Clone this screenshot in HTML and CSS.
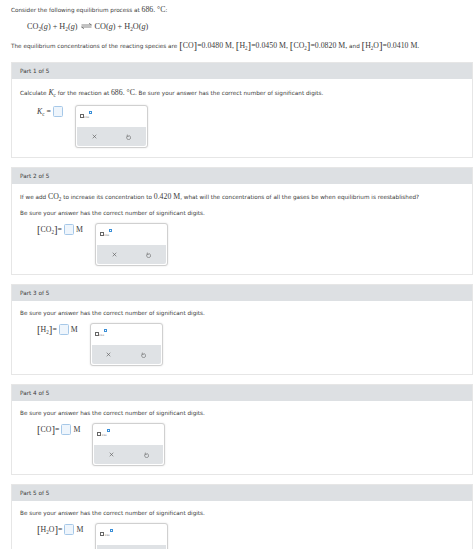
FILE: index.html
```html
<!DOCTYPE html>
<html>
<head>
<meta charset="utf-8">
<link rel="stylesheet" href="styles.css">
</head>
<body>
<div class="intro">
  <p class="txt l1">Consider the following equilibrium process at <span class="m">686. °C</span>:</p>
  <p class="eq m">CO<sub>2</sub>(<i>g</i>) + H<sub>2</sub>(<i>g</i>) <svg class="arr" width="11" height="6" viewBox="0 0 11 6"><path d="M0.5 2 H10.5 L8 0.3 M10.5 4 H0.5 L3 5.7" fill="none" stroke="#333" stroke-width="0.6"/></svg> CO(<i>g</i>) + H<sub>2</sub>O(<i>g</i>)</p>
  <p class="txt conc">The equilibrium concentrations of the reacting species are <span class="m"><span class="br">[</span>CO<span class="br">]</span>=0.0480 M, <span class="br">[</span>H<sub>2</sub><span class="br">]</span>=0.0450 M, <span class="br">[</span>CO<sub>2</sub><span class="br">]</span>=0.0820 M, </span>and <span class="m"><span class="br">[</span>H<sub>2</sub>O<span class="br">]</span>=0.0410 M.</span></p>
</div>

<section class="card">
  <div class="hd">Part 1 of 5</div>
  <div class="bd first">
    <p class="txt">Calculate <span class="m"><i>K</i><sub>c</sub></span> for the reaction at <span class="m">686. °C</span>. Be sure your answer has the correct number of significant digits.</p>
    <div class="row r1">
      <div class="ans"><span class="m lab"><i>K</i><sub>c</sub> =</span><span class="box"></span></div>
      <div class="pop">
        <div class="ptop"><span class="sq"></span><span class="x10">×10</span><span class="sup"></span></div>
        <div class="pbar">
          <span class="btn"><svg width="5" height="5" viewBox="0 0 5 5"><path d="M0.7 0.7 L4.3 4.3 M4.3 0.7 L0.7 4.3" stroke="#555" stroke-width="0.6" fill="none"/></svg></span>
          <span class="btn"><svg width="5" height="6" viewBox="0 0 5 6"><path d="M1.2 2.2 A2 2 0 1 0 2.6 1.6" stroke="#555" stroke-width="0.55" fill="none"/><path d="M1.4 0.6 L1.1 2.3 L2.8 2.4" stroke="#555" stroke-width="0.55" fill="none"/></svg></span>
        </div>
      </div>
    </div>
  </div>
</section>

<section class="card">
  <div class="hd">Part 2 of 5</div>
  <div class="bd second">
    <p class="txt">If we add <span class="m">CO<sub>2</sub></span> to increase its concentration to <span class="m">0.420 M</span>, what will the concentrations of all the gases be when equilibrium is reestablished?</p>
    <p class="txt next">Be sure your answer has the correct number of significant digits.</p>
    <div class="row">
      <div class="ans"><span class="m lab"><span class="br">[</span>CO<sub>2</sub><span class="br">]</span>=</span><span class="box"></span><span class="m unit">M</span></div>
      <div class="pop">
        <div class="ptop"><span class="sq"></span><span class="x10">×10</span><span class="sup"></span></div>
        <div class="pbar">
          <span class="btn"><svg width="5" height="5" viewBox="0 0 5 5"><path d="M0.7 0.7 L4.3 4.3 M4.3 0.7 L0.7 4.3" stroke="#555" stroke-width="0.6" fill="none"/></svg></span>
          <span class="btn"><svg width="5" height="6" viewBox="0 0 5 6"><path d="M1.2 2.2 A2 2 0 1 0 2.6 1.6" stroke="#555" stroke-width="0.55" fill="none"/><path d="M1.4 0.6 L1.1 2.3 L2.8 2.4" stroke="#555" stroke-width="0.55" fill="none"/></svg></span>
        </div>
      </div>
    </div>
  </div>
</section>

<section class="card">
  <div class="hd">Part 3 of 5</div>
  <div class="bd">
    <p class="txt">Be sure your answer has the correct number of significant digits.</p>
    <div class="row">
      <div class="ans"><span class="m lab"><span class="br">[</span>H<sub>2</sub><span class="br">]</span>=</span><span class="box"></span><span class="m unit">M</span></div>
      <div class="pop">
        <div class="ptop"><span class="sq"></span><span class="x10">×10</span><span class="sup"></span></div>
        <div class="pbar">
          <span class="btn"><svg width="5" height="5" viewBox="0 0 5 5"><path d="M0.7 0.7 L4.3 4.3 M4.3 0.7 L0.7 4.3" stroke="#555" stroke-width="0.6" fill="none"/></svg></span>
          <span class="btn"><svg width="5" height="6" viewBox="0 0 5 6"><path d="M1.2 2.2 A2 2 0 1 0 2.6 1.6" stroke="#555" stroke-width="0.55" fill="none"/><path d="M1.4 0.6 L1.1 2.3 L2.8 2.4" stroke="#555" stroke-width="0.55" fill="none"/></svg></span>
        </div>
      </div>
    </div>
  </div>
</section>

<section class="card">
  <div class="hd">Part 4 of 5</div>
  <div class="bd">
    <p class="txt">Be sure your answer has the correct number of significant digits.</p>
    <div class="row">
      <div class="ans"><span class="m lab"><span class="br">[</span>CO<span class="br">]</span>=</span><span class="box"></span><span class="m unit">M</span></div>
      <div class="pop">
        <div class="ptop"><span class="sq"></span><span class="x10">×10</span><span class="sup"></span></div>
        <div class="pbar">
          <span class="btn"><svg width="5" height="5" viewBox="0 0 5 5"><path d="M0.7 0.7 L4.3 4.3 M4.3 0.7 L0.7 4.3" stroke="#555" stroke-width="0.6" fill="none"/></svg></span>
          <span class="btn"><svg width="5" height="6" viewBox="0 0 5 6"><path d="M1.2 2.2 A2 2 0 1 0 2.6 1.6" stroke="#555" stroke-width="0.55" fill="none"/><path d="M1.4 0.6 L1.1 2.3 L2.8 2.4" stroke="#555" stroke-width="0.55" fill="none"/></svg></span>
        </div>
      </div>
    </div>
  </div>
</section>

<section class="card">
  <div class="hd">Part 5 of 5</div>
  <div class="bd">
    <p class="txt">Be sure your answer has the correct number of significant digits.</p>
    <div class="row">
      <div class="ans"><span class="m lab"><span class="br">[</span>H<sub>2</sub>O<span class="br">]</span>=</span><span class="box"></span><span class="m unit">M</span></div>
      <div class="pop">
        <div class="ptop"><span class="sq"></span><span class="x10">×10</span><span class="sup"></span></div>
        <div class="pbar">
          <span class="btn"><svg width="5" height="5" viewBox="0 0 5 5"><path d="M0.7 0.7 L4.3 4.3 M4.3 0.7 L0.7 4.3" stroke="#555" stroke-width="0.6" fill="none"/></svg></span>
          <span class="btn"><svg width="5" height="6" viewBox="0 0 5 6"><path d="M1.2 2.2 A2 2 0 1 0 2.6 1.6" stroke="#555" stroke-width="0.55" fill="none"/><path d="M1.4 0.6 L1.1 2.3 L2.8 2.4" stroke="#555" stroke-width="0.55" fill="none"/></svg></span>
        </div>
      </div>
    </div>
  </div>
</section>
</body>
</html>
```

FILE: styles.css
```css
* { box-sizing: border-box; }
html, body { background: #fff; }
body {
  margin: 0;
  padding: 6px 0 0 10px;
  width: 474px;
  font-family: "DejaVu Sans", Verdana, sans-serif;
  font-size: 5.7px;
  color: #3a3a3a;
}
p { margin: 0; }
sub { font-size: 65%; vertical-align: -1.5px; line-height: 0; }
.txt { line-height: 8px; white-space: nowrap; }
.m { font-family: "Liberation Serif", "Times New Roman", serif; font-size: 7.8px; }
.br { font-size: 10.8px; font-weight: 300; vertical-align: -1px; line-height: 0; }
.intro { padding-left: 1px; }
.intro .eq {
  margin: 8px 0 0 16px;
  font-size: 8.2px;
  line-height: 10px;
}
.arr { vertical-align: 0px; margin: 0 1px; }
.conc { margin-top: 9px; line-height: 10px; }

.card {
  margin: 11px 0 0 1px;
  width: 462px;
  border: 1px solid #e6e6e6;
}
.card + .card { margin-top: 9px; }
.hd {
  height: 16px;
  line-height: 16px;
  padding-left: 8px;
  background: #dde0e3;
}
.bd { padding: 8px 9px 8px 8px; }
.bd.first { padding-top: 10px; padding-bottom: 9px; }
.bd.second { padding-top: 9px; }
.next { margin-top: 8px; }

.row {
  display: flex;
  align-items: flex-start;
  margin: 6px 0 0 17px;
}
.row.r1 { margin-top: 8px; }
.ans {
  display: flex;
  align-items: center;
  height: 13px;
  margin-right: 12px;
}
.lab { line-height: 13px; }
.box {
  width: 10px;
  height: 11px;
  margin: 0 2px 0 2px;
  border: 1px solid #a6c8e8;
  border-radius: 1.5px;
  background: #eef5fc;
}
.r1 .ans { margin-right: 10px; }
.r1 .box { margin-left: 2px; }
.unit { line-height: 13px; }

.pop {
  width: 73px;
  height: 43px;
  border: 1px solid #d0d0d0;
  border-radius: 3px;
  box-shadow: 0 0 2px rgba(0,0,0,0.12);
  background: #fff;
  display: flex;
  flex-direction: column;
}
.ptop {
  height: 21px;
  padding: 5px 0 0 4px;
  display: flex;
  align-items: flex-start;
}
.sq {
  width: 4px;
  height: 4px;
  margin-top: 3px;
  border: 0.6px solid #666;
}
.x10 {
  font-size: 2.5px;
  margin-top: 5px;
  color: #555;
  line-height: 3px;
}
.sup {
  width: 3px;
  height: 3px;
  margin-top: 0;
  border: 0.6px solid #3a8fd8;
}
.pbar {
  margin: 0 1px 1px 1px;
  flex: 1;
  background: #dfe2e5;
  border-radius: 0 0 2px 2px;
  display: flex;
}
.btn {
  flex: 1;
  display: flex;
  align-items: center;
  justify-content: center;
}
.btn svg { display: block; }
```
